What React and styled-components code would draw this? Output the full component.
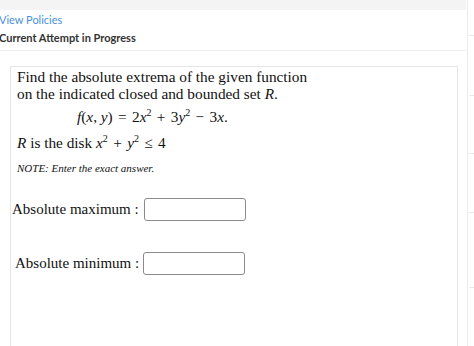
import React from 'react';
import styled, { createGlobalStyle } from 'styled-components';

const GlobalStyle = createGlobalStyle`
  html, body {
    margin: 0;
    padding: 0;
    background: #ffffff;
    overflow: hidden;
  }
`;

const Page = styled.div`
  display: flex;
  width: 474px;
  height: 346px;
  overflow: hidden;
`;

const Main = styled.div`
  width: 467px;
  flex-shrink: 0;
  border-right: 1px solid #ececec;
`;

const TopBand = styled.div`
  height: 10px;
  width: 466px;
  background: #f4f4f4;
`;

const Header = styled.div`
  height: 40px;
  width: 466px;
  border-bottom: 1px solid #efefef;
  font-family: Lato, 'Liberation Sans', sans-serif;
`;

const PolicyLink = styled.a`
  display: block;
  margin-left: -1px;
  color: #4a90d9;
  font-size: 11px;
  line-height: 15px;
  padding-top: 2px;
  text-decoration: none;
`;

const AttemptTitle = styled.div`
  margin-left: -1px;
  color: #333;
  font-size: 11px;
  font-weight: 700;
  line-height: 14px;
  padding-top: 4px;
`;

const QuestionBox = styled.div`
  margin: 15px 0 0 10px;
  width: 446px;
  height: 300px;
  border: 1px solid #e4e4e4;
  font-family: 'Liberation Serif', serif;
  color: #111;
`;

const Prompt = styled.div`
  padding: 1px 0 0 6px;
  font-size: 15.3px;
  line-height: 17px;
`;

const Formula = styled.div`
  padding: 6px 0 0 60px;
  line-height: 18px;
`;

const Line = styled.div`
  padding-top: 8px;
  line-height: 18px;
`;

const Note = styled.div`
  padding-top: 9px;
  font-size: 11px;
  font-style: italic;
  line-height: 14px;
`;

const V = styled.i`
  font-style: italic;
`;

const Op = styled.span`
  padding: 0 1.5px;
`;

const Sup = styled.sup`
  font-size: 10px;
  line-height: 0;
  vertical-align: 6px;
`;

const AnswerRow = styled.div`
  display: flex;
  align-items: center;
  margin-top: ${(p) => p.$top}px;
  padding-left: ${(p) => p.$indent}px;
  font-size: 15px;
`;

const AnswerLabel = styled.span`
  width: ${(p) => p.$width}px;
`;

const AnswerInput = styled.input`
  box-sizing: border-box;
  width: 102px;
  height: 23px;
  margin: 0;
  border: 1px solid #8a8a8a;
  border-radius: 3px;
  background: #fff;
`;

const RightRail = styled.div`
  flex: 1;
  display: flex;
  flex-direction: column;
`;

const RailRow = styled.div`
  height: ${(p) => p.$h}px;
  border-bottom: 1px solid #e8e8e8;
  margin-left: 1px;
`;

export default function App() {
  return (
    <>
      <GlobalStyle />
      <Page>
        <Main>
          <TopBand />
          <Header>
            <PolicyLink href="#">View Policies</PolicyLink>
            <AttemptTitle>Current Attempt in Progress</AttemptTitle>
          </Header>
          <QuestionBox>
            <Prompt>
              Find the absolute extrema of the given function
              <br />
              on the indicated closed and bounded set <V>R</V>.
              <Formula>
                <V>f</V>(<V>x</V>, <V>y</V>) <Op>=</Op> 2<V>x</V>
                <Sup>2</Sup> <Op>+</Op> 3<V>y</V>
                <Sup>2</Sup> <Op>−</Op> 3<V>x</V>.
              </Formula>
              <Line>
                <V>R</V> is the disk <V>x</V>
                <Sup>2</Sup> <Op>+</Op> <V>y</V>
                <Sup>2</Sup> <Op>≤</Op> 4
              </Line>
              <Note>NOTE: Enter the exact answer.</Note>
            </Prompt>
            <AnswerRow $top={23} $indent={1}>
              <AnswerLabel $width={132}>Absolute maximum :</AnswerLabel>
              <AnswerInput />
            </AnswerRow>
            <AnswerRow $top={31} $indent={4}>
              <AnswerLabel $width={128}>Absolute minimum :</AnswerLabel>
              <AnswerInput />
            </AnswerRow>
          </QuestionBox>
        </Main>
        <RightRail>
          <RailRow $h={35} />
          <RailRow $h={59} />
          <RailRow $h={57} />
          <RailRow $h={58} />
          <RailRow $h={74} />
        </RightRail>
      </Page>
    </>
  );
}
